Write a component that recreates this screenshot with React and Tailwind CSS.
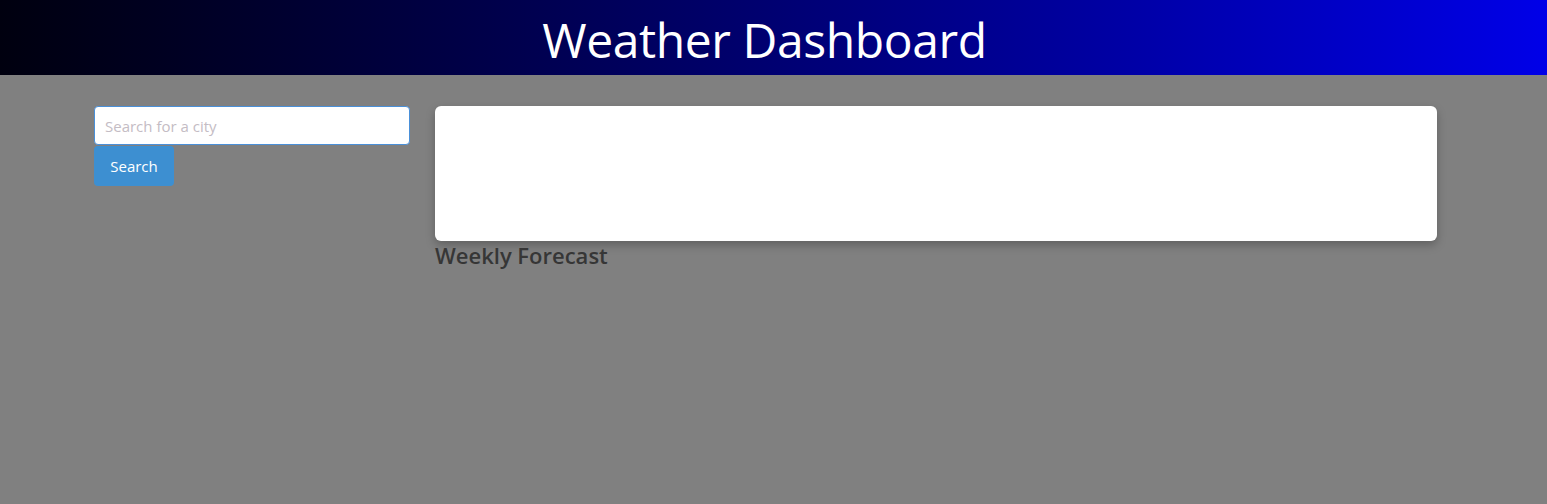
import React, { useState } from 'react';

export default function App() {
  const [city, setCity] = useState('');

  return (
    <div className="min-h-screen bg-[#808080] font-['Open_Sans','Noto_Sans',sans-serif]">
      {/* Header */}
      <header className="h-[75px] flex items-center justify-center bg-gradient-to-r from-[#00000f] to-[#0000e8]">
        <h1 className="text-[48px] leading-none text-white tracking-[-0.4px] pt-[4px] pr-[18px]">Weather Dashboard</h1>
      </header>

      {/* Main */}
      <main className="flex pl-[94px] pt-[31px] gap-[25px]">
        {/* Search column */}
        <aside className="w-[316px] flex flex-col">
          <input
            value={city}
            onChange={(e) => setCity(e.target.value)}
            placeholder="Search for a city"
            className="h-[39px] w-full bg-white border border-[#4a90d9] rounded-[4px] px-[10px] text-[15px] text-gray-800 placeholder:text-[#c4bcc4] outline-none"
          />
          <button className="mt-[1px] w-[80px] h-[40px] bg-[#3d8fd1] text-white text-[15px] rounded-[4px]">
            Search
          </button>
        </aside>

        {/* Current weather + forecast */}
        <section className="w-[1002px] flex flex-col">
          <div className="h-[135px] bg-white rounded-[6px] shadow-[0_4px_10px_rgba(0,0,0,0.25)]"></div>
          <h2 className="-mt-[1px] text-[22px] leading-[30px] font-semibold text-[#363636]">Weekly Forecast</h2>
        </section>
      </main>
    </div>
  );
}
